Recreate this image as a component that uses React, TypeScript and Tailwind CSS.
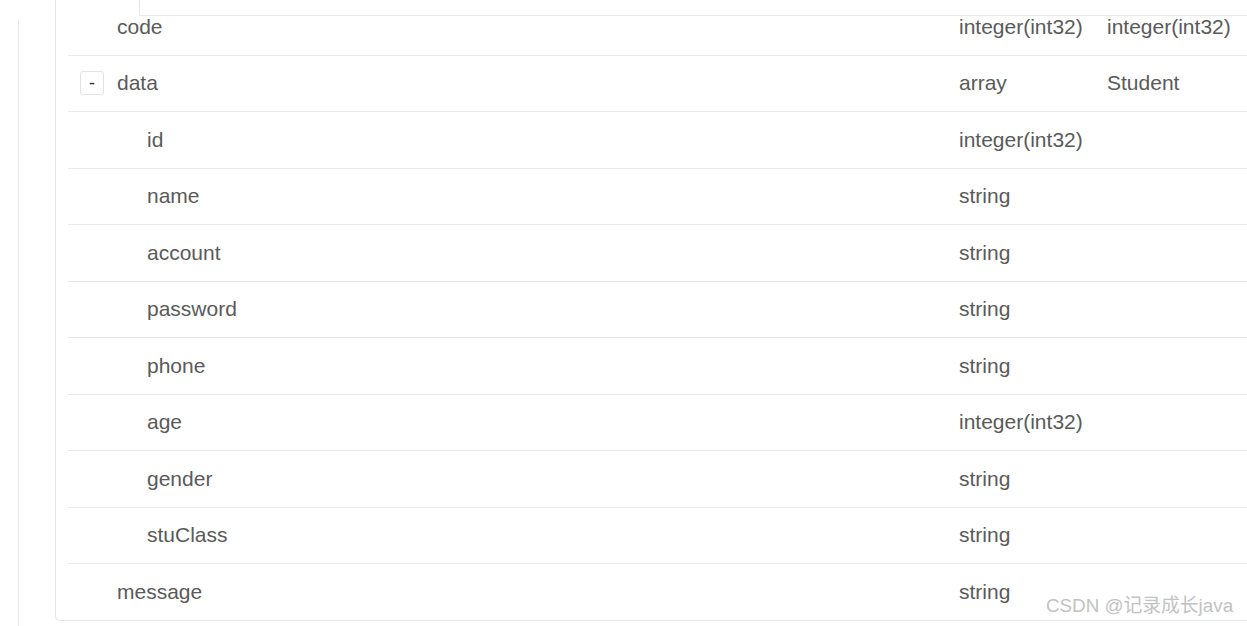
type Row = {
  name: string;
  type: string;
  schema?: string;
  level: number;
  toggle?: boolean;
};

const rows: Row[] = [
  { name: "code", type: "integer(int32)", schema: "integer(int32)", level: 0 },
  { name: "data", type: "array", schema: "Student", level: 0, toggle: true },
  { name: "id", type: "integer(int32)", level: 1 },
  { name: "name", type: "string", level: 1 },
  { name: "account", type: "string", level: 1 },
  { name: "password", type: "string", level: 1 },
  { name: "phone", type: "string", level: 1 },
  { name: "age", type: "integer(int32)", level: 1 },
  { name: "gender", type: "string", level: 1 },
  { name: "stuClass", type: "string", level: 1 },
  { name: "message", type: "string", level: 0 },
];

function FieldRow({ row, last }: { row: Row; last: boolean }) {
  return (
    <div
      className={
        last
          ? "flex h-[56px] items-center pb-[1px]"
          : "flex h-[56.5px] items-center border-b border-[#e8e8e8] pb-[1px]"
      }
    >
      <div className="flex w-[891px] items-center">
        {row.toggle ? (
          <>
            <span className="ml-[12px] flex h-[24px] w-[24px] items-center justify-center rounded-[3px] border border-[#e3e3e3] text-[18px] leading-none text-[#333]">
              -
            </span>
            <span className="ml-[13px]">{row.name}</span>
          </>
        ) : (
          <span className={row.level === 1 ? "pl-[79px]" : "pl-[49px]"}>{row.name}</span>
        )}
      </div>
      <div className="w-[148px]">{row.type}</div>
      <div className="flex-1">{row.schema ?? ""}</div>
    </div>
  );
}

export default function App() {
  return (
    <div className="relative flex h-[626px] w-[1247px] flex-col overflow-hidden bg-white font-['Liberation_Sans','Noto_Sans_CJK_SC',sans-serif] text-[21px] text-[#5a5a5a]">
      {/* header tab above the table */}
      <div className="absolute left-[139px] right-0 top-[-10px] h-[26px] border-b border-l border-[#e8e8e8] bg-white" />

      <div className="ml-[18px] mt-[20px] flex-1 border-l border-[#ebebeb] pl-[36px]">
        <div className="rounded-bl-[5px] border-b border-l border-[#e6e6e6]">
          <div className="-mt-[21px] pl-[12px]">
            {rows.map((r, i) => (
              <FieldRow key={r.name} row={r} last={i === rows.length - 1} />
            ))}
          </div>
        </div>
      </div>

      {/* watermark */}
      <div className="absolute left-[1046px] top-[594px] text-[18.8px] leading-[24px] text-[#c2c2c2]">
        CSDN @记录成长java
      </div>
    </div>
  );
}
